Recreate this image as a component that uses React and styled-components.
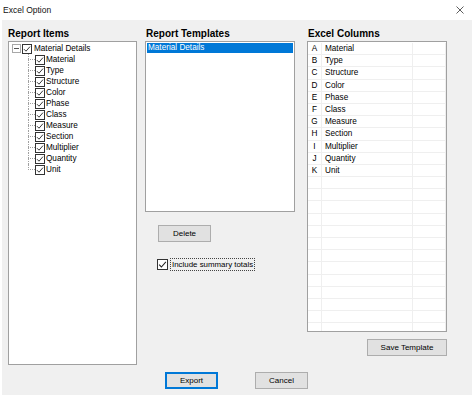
import React from 'react';
import styled, { createGlobalStyle } from 'styled-components';

const GlobalStyle = createGlobalStyle`
  body {
    margin: 0;
    font-family: "Liberation Sans", Arial, sans-serif;
    background: #fff;
  }
`;

const Window = styled.div`
  width: 474px;
  height: 398px;
  background: #fff;
  display: flex;
  flex-direction: column;
  overflow: hidden;
`;

const TitleBar = styled.div`
  height: 20px;
  display: flex;
  align-items: center;
  justify-content: space-between;
  padding: 0 10px 0 3px;
  font-size: 8.5px;
  color: #111;
`;

const Content = styled.div`
  background: #f0f0f0;
  margin: 0 2px 3px 2px;
  height: 375px;
  padding: 7px 0 0 6px;
  box-sizing: border-box;
  display: flex;
  flex-direction: column;
`;

const TopRow = styled.div`
  display: flex;
  align-items: flex-start;
`;

const Column = styled.div`
  width: ${p => p.$width}px;
  margin-right: ${p => p.$gap || 0}px;
  display: flex;
  flex-direction: column;
`;

const Header = styled.div`
  height: 14px;
  line-height: 14px;
  font-size: 10px;
  font-weight: bold;
  color: #000;
  padding-left: ${p => p.$indent || 0}px;
`;

const Box = styled.div`
  height: ${p => p.$height}px;
  background: #fff;
  border: 1px solid #a0a0a0;
  box-sizing: border-box;
  overflow: hidden;
  padding-top: ${p => p.$padTop || 0}px;
`;

const TreeRow = styled.div`
  height: 11px;
  display: flex;
  align-items: center;
  font-size: 8.2px;
  color: #000;
  padding-left: ${p => p.$indent}px;
`;

const Expander = styled.span`
  width: 9px;
  height: 9px;
  box-sizing: border-box;
  border: 1px solid #a8a8a8;
  background: #fff;
  position: relative;
  margin-right: 1px;
  &::after {
    content: '';
    position: absolute;
    left: 1px;
    right: 1px;
    top: 3px;
    height: 1px;
    background: #555;
  }
`;

const Connector = styled.span`
  width: 7px;
  height: 11px;
  position: relative;
  &::before {
    content: '';
    position: absolute;
    left: 0;
    top: 0;
    height: ${p => (p.$last ? '6px' : '11px')};
    border-left: 1px dotted #a0a0a0;
  }
  &::after {
    content: '';
    position: absolute;
    left: 0;
    top: 5px;
    width: 7px;
    border-top: 1px dotted #a0a0a0;
  }
`;

const CheckBox = styled.span`
  width: ${p => p.$size || 10}px;
  height: ${p => p.$size || 10}px;
  box-sizing: border-box;
  border: 1px solid #333;
  background: #fff;
  display: inline-flex;
  align-items: center;
  justify-content: center;
  margin-right: ${p => p.$gap || 1}px;
  flex-shrink: 0;
`;

const Check = ({ size = 10, gap }) => (
  <CheckBox $size={size} $gap={gap}>
    <svg width={size - 2} height={size - 2} viewBox="0 0 8 8">
      <path d="M1 4.2 L3 6.2 L7 1.6" fill="none" stroke="#222" strokeWidth="0.9" />
    </svg>
  </CheckBox>
);

const ListItem = styled.div`
  height: 10px;
  line-height: 10px;
  margin: 0 1px;
  padding-left: 1px;
  font-size: 8.2px;
  background: ${p => (p.$selected ? '#0078d7' : 'transparent')};
  color: ${p => (p.$selected ? '#fff' : '#000')};
`;

const Button = styled.button`
  width: ${p => p.$width}px;
  height: 17px;
  padding: 0;
  font-family: "Liberation Sans", Arial, sans-serif;
  font-size: 8px;
  color: #000;
  background: #e1e1e1;
  border: 1px solid ${p => (p.$primary ? '#0078d7' : '#adadad')};
  box-shadow: ${p => (p.$primary ? 'inset 0 0 0 1px #0078d7' : 'none')};
  border-radius: 0;
  margin: ${p => p.$margin || 0};
  align-self: ${p => p.$align || 'auto'};
`;

const CheckRow = styled.div`
  display: flex;
  align-items: center;
  margin: 16px 0 0 12px;
  height: 13px;
`;

const FocusLabel = styled.span`
  font-size: 7.9px;
  color: #000;
  border: 1px dotted #444;
  padding: 0 1px;
  line-height: 11px;
  margin-left: 1px;
`;

const GridRow = styled.div`
  display: grid;
  grid-template-columns: 14px 91px 1fr;
  height: 12.2px;
  font-size: 8.2px;
  color: #000;
`;

const GridCell = styled.div`
  border-right: 1px solid #efefef;
  border-bottom: 1px solid #efefef;
  line-height: 11px;
  text-align: ${p => (p.$center ? 'center' : 'left')};
  padding-left: ${p => (p.$center ? 0 : 3)}px;
  overflow: hidden;
  white-space: nowrap;
`;

const BottomRow = styled.div`
  display: flex;
  gap: 37px;
  margin: 7px 0 0 157px;
`;

const items = ['Material', 'Type', 'Structure', 'Color', 'Phase', 'Class', 'Measure', 'Section', 'Multiplier', 'Quantity', 'Unit'];
const letters = ['A', 'B', 'C', 'D', 'E', 'F', 'G', 'H', 'I', 'J', 'K'];

export default function App() {
  const gridRows = [];
  for (let i = 0; i < 24; i++) {
    gridRows.push(
      <GridRow key={i}>
        <GridCell $center>{letters[i] || ''}</GridCell>
        <GridCell>{items[i] || ''}</GridCell>
        <GridCell />
      </GridRow>
    );
  }

  return (
    <Window>
      <GlobalStyle />
      <TitleBar>
        <span>Excel Option</span>
        <svg width="8" height="8" viewBox="0 0 8 8">
          <path d="M0.5 0.5 L7.5 7.5 M7.5 0.5 L0.5 7.5" stroke="#333" strokeWidth="0.8" />
        </svg>
      </TitleBar>
      <Content>
        <TopRow>
          <Column $width={129} $gap={8}>
            <Header>Report Items</Header>
            <Box $height={324} $padTop={1}>
              <TreeRow $indent={3}>
                <Expander />
                <Check gap={2} />
                <span>Material Details</span>
              </TreeRow>
              {items.map((it, i) => (
                <TreeRow key={it} $indent={19}>
                  <Connector $last={i === items.length - 1} />
                  <Check />
                  <span>{it}</span>
                </TreeRow>
              ))}
            </Box>
          </Column>
          <Column $width={150} $gap={12}>
            <Header $indent={1}>Report Templates</Header>
            <Box $height={171} $padTop={1}>
              <ListItem $selected>Material Details</ListItem>
            </Box>
            <Button $width={53} $margin="13px 0 0 13px">Delete</Button>
            <CheckRow>
              <Check size={11} gap={1} />
              <FocusLabel>Include summary totals</FocusLabel>
            </CheckRow>
          </Column>
          <Column $width={140}>
            <Header $indent={1}>Excel Columns</Header>
            <Box $height={291} $padTop={1}>
              {gridRows}
            </Box>
            <Button $width={80} $margin="7px 0 0 0" $align="flex-end">Save Template</Button>
          </Column>
        </TopRow>
        <BottomRow>
          <Button $width={53} $primary>Export</Button>
          <Button $width={53}>Cancel</Button>
        </BottomRow>
      </Content>
    </Window>
  );
}
